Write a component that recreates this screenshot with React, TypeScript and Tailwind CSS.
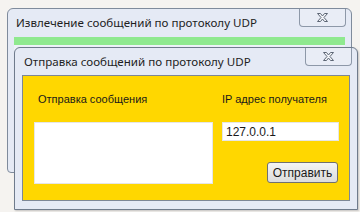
// Two overlapping Win7-basic style forms: receive window behind, send window in front.
function CloseButton() {
  return (
    <div className="absolute top-0 right-[5px] flex h-[18px] w-[47px] items-center justify-center rounded-b-[4px] border border-t-0 border-[#8d98a8] bg-[#e9edf6]">
      <svg width="13" height="11" viewBox="0 0 13 11">
        <path
          d="M1.5 1.5h3l2 2.5 2-2.5h3l-3.5 4 3.5 4h-3l-2-2.5-2 2.5h-3l3.5-4z"
          fill="#f4f6fa"
          stroke="#5d6675"
          strokeWidth="1"
          strokeLinejoin="round"
        />
      </svg>
    </div>
  )
}

export default function App() {
  return (
    <div className="relative h-[212px] w-[360px] overflow-hidden bg-[#f5f3f0] font-['Noto_Sans',sans-serif]">
      {/* back window */}
      <div className="absolute left-[7px] top-[8px] flex h-[165px] w-[345px] flex-col rounded-t-[6px] rounded-b-[4px] border border-[#7f8b9c] bg-[#e5eaf5] px-[6px] pb-[6px]">
        <CloseButton />
        <div className="flex h-[28px] items-center pl-[2px] text-[11.6px] text-[#1e1e1e]">
          Извлечение сообщений по протоколу UDP
        </div>
        <div className="h-[8px] bg-[#8fe98f]" />
        <div className="flex-1 bg-[#eef1f8]" />
      </div>

      {/* front window */}
      <div className="absolute left-[14px] top-[47px] flex h-[163px] w-[344px] flex-col rounded-t-[6px] border border-[#6f7b8c] bg-[#e5eaf5] px-[7px] pb-[8px] shadow-[1px_1px_2px_rgba(0,0,0,0.2)]">
        <CloseButton />
        <div className="flex h-[27px] items-center pl-[2px] text-[11.6px] text-[#1e1e1e]">
          Отправка сообщений по протоколу UDP
        </div>
        <div className="flex flex-1 border border-[#7d8796] bg-[#ffd700] pl-[11px] pt-[14px] font-['Liberation_Sans',sans-serif] text-[11px] text-[#1a1a1a]">
          <div className="flex w-[179px] flex-col">
            <div className="pl-[4px] leading-[18px]">Отправка сообщения</div>
            <div className="mt-[14px] h-[62px] border border-[#e6e6e6] bg-white" />
          </div>
          <div className="ml-[9px] flex w-[117px] flex-col">
            <div className="leading-[18px]">IP адрес получателя</div>
            <div className="mt-[14px] flex h-[19px] items-center border border-[#e6e6e6] bg-white pl-[3px] text-[12px]">
              127.0.0.1
            </div>
            <button className="ml-auto mr-[1px] mt-[21px] flex h-[21px] w-[71px] items-center justify-center rounded-[3px] border border-[#707070] bg-gradient-to-b from-[#f4f4f4] to-[#dcdcdc] text-[12px] text-[#1a1a1a]">
              Отправить
            </button>
          </div>
        </div>
      </div>
    </div>
  )
}
